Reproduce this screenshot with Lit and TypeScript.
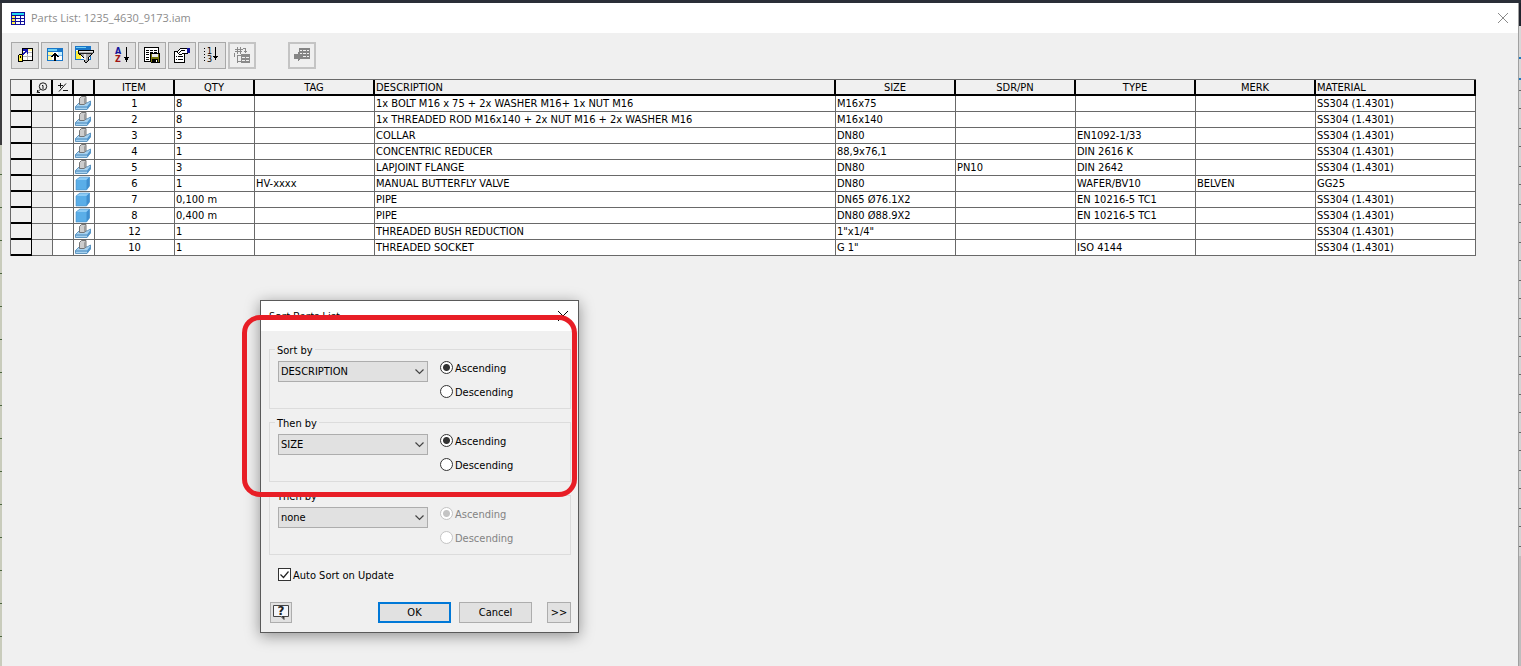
import { LitElement, html, svg, css } from "lit";
import { customElement, state } from "lit/decorators.js";
import { classMap } from "lit/directives/class-map.js";

type Part = {
  kind: "assembly" | "part";
  item: string;
  qty: string;
  tag?: string;
  description: string;
  size?: string;
  sdr?: string;
  type?: string;
  merk?: string;
  material: string;
};

const SS = "SS304 (1.4301)";

const PARTS: Part[] = [
  { kind: "assembly", item: "1", qty: "8", description: "1x BOLT M16 x 75 + 2x WASHER M16+ 1x NUT M16", size: "M16x75", material: SS },
  { kind: "assembly", item: "2", qty: "8", description: "1x THREADED ROD M16x140 + 2x NUT M16 + 2x WASHER M16", size: "M16x140", material: SS },
  { kind: "assembly", item: "3", qty: "3", description: "COLLAR", size: "DN80", type: "EN1092-1/33", material: SS },
  { kind: "assembly", item: "4", qty: "1", description: "CONCENTRIC REDUCER", size: "88,9x76,1", type: "DIN 2616 K", material: SS },
  { kind: "assembly", item: "5", qty: "3", description: "LAPJOINT FLANGE", size: "DN80", sdr: "PN10", type: "DIN 2642", material: SS },
  { kind: "part", item: "6", qty: "1", tag: "HV-xxxx", description: "MANUAL BUTTERFLY VALVE", size: "DN80", type: "WAFER/BV10", merk: "BELVEN", material: "GG25" },
  { kind: "part", item: "7", qty: "0,100 m", description: "PIPE", size: "DN65 Ø76.1X2", type: "EN 10216-5 TC1", material: SS },
  { kind: "part", item: "8", qty: "0,400 m", description: "PIPE", size: "DN80 Ø88.9X2", type: "EN 10216-5 TC1", material: SS },
  { kind: "assembly", item: "12", qty: "1", description: "THREADED BUSH REDUCTION", size: '1"x1/4"', material: SS },
  { kind: "assembly", item: "10", qty: "1", description: "THREADED SOCKET", size: 'G 1"', type: "ISO 4144", material: SS },
];

const ICONS = {
  column: svg`
    <path d="M7 2h11v13H7z" fill="#000"/>
    <path d="M8 3h9v11H8z" fill="#fff"/>
    <path d="M8 3h4v2H8zM13 3h4v2h-4z" fill="#fff79a"/>
    <path d="M12 3h1v11h-1zM8 6h9v1H8zM8 10h9v1H8z" fill="#b8b8b8"/>
    <path d="M8 3h5v5h-1V6h-1v1h-1v1H9v1H7V8h1V7h1V6h1V5H8z" fill="#1414b4"/>
    <path d="M3 9h1V8h3v1h1v7H3z" fill="#000"/>
    <path d="M4 9h3v6H4z" fill="#ffee3c"/>
    <path d="M5 10h1v2H5z" fill="#000"/>`,
  heading: svg`
    <path d="M2 2h16v13H2z" fill="#1a76c8"/>
    <path d="M3 3h9v2H3z" fill="#6fd0f5"/>
    <path d="M3 6h14v8H3z" fill="#fff"/>
    <path d="M3 6h5v3H3zM3 10h4v4H3z" fill="#fff6a0"/>
    <path d="M13 6h4v3h-4z" fill="#c8f0ff"/>
    <path d="M3 9h14v1H3z" fill="#7bb8e8"/>
    <path d="M9 7h2v1h1v1h1v1h1v1h-2v-1h-1v5H9v-5H8v1H6v-1h1V9h1V8h1z" fill="#000"/>`,
  filter: svg`
    <path d="M0 0h16v14H0z" fill="#1a76c8"/>
    <path d="M1 1h10v1H1z" fill="#6fd0f5"/>
    <path d="M1 4h14v9H1z" fill="#fff"/>
    <path d="M1 5h5v8H1z" fill="#ffee3c"/>
    <path d="M3 4.500h15.500v2L13 12v3l-2 2-2-2v-3L3 6.500z" fill="#a9a9a9" stroke="#000"/>
    <path d="M4 5h14v1H4zM9 8h2v6H9z" fill="#e8e8e8"/>
    <path d="M4 7h14v1H4z" fill="#222"/>`,
  sort: svg`
    <text x="3" y="8" class="glyph bold" fill="#14149b">A</text>
    <text x="3" y="16" class="glyph bold" fill="#a01414">Z</text>
    <path d="M14 1h1v10h2v1h-1v2h-1v2h-1v-2h-1v-2h-1v-1h2z" fill="#000"/>`,
  export: svg`
    <path d="M2.500 1.500h14v14h-14z" fill="#fff" stroke="#000"/>
    <path d="M4 4h3M8 4h3M12 4h3M4 6h3M8 6h3M12 6h3M4 8.500h3M8 8.500h3M4 11h3M4 13h3" stroke="#000" fill="none"/>
    <path d="M8.500 7.500h9v9h-8l-1-1z" fill="#77770a" stroke="#000"/>
    <path d="M10 8h6v3h-6z" fill="#e8e8e8"/>
    <path d="M10 13h6v3h-6z" fill="#000"/>
    <path d="M14 14h1v2h-1z" fill="#fff"/>`,
  table: svg`
    <path d="M2.500 5.500h10v11h-10z" fill="#fff" stroke="#000"/>
    <path d="M4 10.500h1M6 10.500h5M4 13.500h1M6 13.500h5" stroke="#000" fill="none"/>
    <path d="M5 6l4-4h6v5h-3l-4 2z" fill="#fff" stroke="#000"/>
    <path d="M7 7l3-3M10 4h3" stroke="#000" fill="none"/>
    <path d="M15 2h3v5h-3z" fill="#14149b"/>`,
  renumber: svg`
    <path d="M2 2h1v1H2zM2 5h1v1H2zM2 8h1v1H2zM2 11h1v1H2zM2 14h1v1H2z" fill="#000"/>
    <text x="5" y="8" class="glyph">1</text>
    <text x="5" y="16" class="glyph">3</text>
    <path d="M13 1h1v9h2v1h-1v1h-1v2h-1v-2h-1v-1h-1v-1h2z" fill="#000"/>`,
  override: svg`
    <path d="M5 1h1v7H5zM8 1h1v7H8zM3 3h8v1H3zM3 5h7v1H3zM2 7h1v4H2zM5 9h1v8H5zM5 9h4v1H5zM5 15h4v1H5zM11 2h3v1h-3zM13 2h1v5h-1zM12 5h3v1h-3z" fill="#8a8a8a"/>
    <path d="M9 8h9v9H9z" fill="#8a8a8a"/>
    <path d="M10 11h3v1h-3zM14 11h3v1h-3zM10 14h3v1h-3zM14 14h3v1h-3z" fill="#efefef"/>`,
  member: svg`
    <path d="M7 2h11v11H7z" fill="#858585"/>
    <path d="M8 4h2v1H8zM11 4h3v1h-3zM15 4h2v1h-2zM8 7h2v1H8zM11 7h3v1h-3zM15 7h2v1h-2zM11 10h3v1h-3zM15 10h2v1h-2z" fill="#efefef"/>
    <path d="M2 8h4V6l5 4-5 5v-2H2z" fill="#858585"/>`,
};

@customElement("tool-button")
class ToolButton extends LitElement {
  static properties = {
    icon: { type: String },
    label: { type: String },
    disabled: { type: Boolean },
  };
  declare icon: keyof typeof ICONS;
  declare label: string;
  declare disabled: boolean;

  static styles = css`
    :host { display: block; }
    button {
      display: flex;
      align-items: center;
      justify-content: center;
      box-sizing: border-box;
      width: 28px;
      height: 27px;
      padding: 0;
      border: 1px solid #a9a9a9;
      background: #e1e1e1;
    }
    button:disabled { background: #efefef; border: 2px solid #c4c4c4; }
    svg { display: block; flex: none; }
    .glyph { font: 8px "DejaVu Sans", sans-serif; }
    .bold { font-weight: 700; }
  `;

  render() {
    return html`<button type="button" aria-label=${this.label} ?disabled=${this.disabled}>
      <svg width="20" height="19" viewBox="0 0 20 19" shape-rendering="crispEdges">${ICONS[this.icon]}</svg>
    </button>`;
  }
}

@customElement("parts-table")
class PartsTable extends LitElement {
  static styles = css`
    :host { display: block; }
    table {
      width: 100%;
      table-layout: fixed;
      border-collapse: separate;
      border-spacing: 0;
      border-top: 1px solid #696969;
      border-left: 1px solid #696969;
      background: #fff;
      color: #000;
    }
    .c-mark { width: 21px; }
    .c-short { width: 80px; }
    .c-mid { width: 120px; }
    .c-long { width: 160px; }
    th, td {
      box-sizing: border-box;
      height: 16px;
      padding: 0 1px;
      overflow: hidden;
      white-space: nowrap;
      line-height: 14px;
      text-align: left;
      font-weight: 400;
      border-right: 1px solid #696969;
      border-bottom: 1px solid #696969;
    }
    th {
      background: #f0f0f0;
      border-right: 2px solid #000;
      border-bottom: 2px solid #000;
      padding: 2px 1px 0;
      line-height: 12px;
    }
    td.edge { background: #f0f0f0; border-right: 1px solid #000; border-bottom: 2px solid #000; }
    td.flag { background: #f0f0f0; }
    .center { text-align: center; }
    svg { display: block; }
    th svg { margin: 0 auto; }
  `;

  private mark(kind: Part["kind"]) {
    return kind === "part"
      ? html`<svg width="16" height="15" viewBox="0 0 16 15" role="img" aria-label="Part">
          <path d="M1 4l4-3h9.500v9l-3 4H1z" fill="#5aaee8"/>
          <path d="M1 4l4-3h9.500l-3 3z" fill="#8ccbf5"/>
          <path d="M11.500 4l3-3v9l-3 4z" fill="#3f8fd0"/>
          <path d="M1 4l4-3h9.500v9l-3 4H1z" fill="none" stroke="#4a90c8" stroke-width=".6"/>
        </svg>`
      : html`<svg width="16" height="15" viewBox="0 0 16 15" role="img" aria-label="Assembly">
          <path d="M.5 10.500L4 7h8l3.500-2v4L12 13.500H.500z" fill="#a9d3f0" stroke="#4684b4" stroke-width=".8"/>
          <path d="M12 10.500L15.500 6v3L12 13.500z" fill="#4f94cc"/>
          <path d="M.5 10.500H12v1H.500z" fill="#3f83bb"/>
          <path d="M4.500 8.500v-6L6.500 .500H11V7L9 8.500z" fill="#cdcdcd" stroke="#6a6a6a" stroke-width=".9"/>
          <path d="M9 8V2.500L11 .500V7z" fill="#9c9c9c"/>
        </svg>`;
  }

  render() {
    return html`<table>
      <colgroup>
        <col class="c-mark"><col class="c-mark"><col class="c-mark"><col class="c-mark">
        <col class="c-short"><col class="c-short"><col class="c-mid"><col>
        <col class="c-mid"><col class="c-mid"><col class="c-mid"><col class="c-mid"><col class="c-long">
      </colgroup>
      <thead>
        <tr>
          <th></th>
          <th><svg width="12" height="12" viewBox="0 0 12 12" role="img" aria-label="Ballooned">
            <circle cx="7" cy="4.500" r="3.700" fill="none" stroke="#000" stroke-width=".9"/>
            <path d="M6 3.500h1V7M4 7.500L1 10.500M1.500 8v2.500H4" fill="none" stroke="#000" stroke-width=".9"/>
          </svg></th>
          <th><svg width="12" height="12" viewBox="0 0 12 12" role="img" aria-label="Visibility">
            <path d="M3.500 1v5M1 3.500h5M2 9.500L9 1.500M6 8.500h5" fill="none" stroke="#000" stroke-width=".9"/>
          </svg></th>
          <th></th>
          <th class="center">ITEM</th>
          <th class="center">QTY</th>
          <th class="center">TAG</th>
          <th>DESCRIPTION</th>
          <th class="center">SIZE</th>
          <th class="center">SDR/PN</th>
          <th class="center">TYPE</th>
          <th class="center">MERK</th>
          <th>MATERIAL</th>
        </tr>
      </thead>
      <tbody>
        ${PARTS.map(
          (p) => html`<tr>
            <td class="edge"></td>
            <td class="flag"></td>
            <td></td>
            <td>${this.mark(p.kind)}</td>
            <td class="center">${p.item}</td>
            <td>${p.qty}</td>
            <td>${p.tag}</td>
            <td>${p.description}</td>
            <td>${p.size}</td>
            <td>${p.sdr}</td>
            <td>${p.type}</td>
            <td>${p.merk}</td>
            <td>${p.material}</td>
          </tr>`
        )}
      </tbody>
    </table>`;
  }
}

type Level = { legend: string; key: string; descending: boolean };

@customElement("sort-dialog")
class SortDialog extends LitElement {
  @state() private levels: Level[] = [
    { legend: "Sort by", key: "DESCRIPTION", descending: false },
    { legend: "Then by", key: "SIZE", descending: false },
    { legend: "Then by", key: "none", descending: false },
  ];

  static styles = css`
    :host {
      display: block;
      box-sizing: border-box;
      border: 1px solid #5a5a5a;
      background: #f0f0f0;
      color: #000;
      box-shadow: 0 3px 14px rgba(0, 0, 0, 0.4);
    }
    header {
      display: flex;
      align-items: center;
      justify-content: space-between;
      height: 30px;
      padding: 0 9px 0 8px;
      background: #fff;
      font: 11px/16px "Open Sans", sans-serif;
    }
    h2 { margin: 0; font: inherit; }
    .close { display: block; padding: 0; border: 0; background: none; }
    .close svg { display: block; }
    form {
      display: flex;
      flex-direction: column;
      gap: 13px;
      padding: 18px 7px 9px 8px;
    }
    fieldset {
      display: grid;
      grid-template-columns: 150px 1fr;
      column-gap: 12px;
      align-items: start;
      position: relative;
      box-sizing: border-box;
      height: 60px;
      margin: 0;
      padding: 11px 8px 0;
      border: 1px solid #dcdcdc;
    }
    legend {
      position: absolute;
      top: -7px;
      left: 5px;
      padding: 0 2px;
      background: #f0f0f0;
      line-height: 16px;
    }
    .picker { display: grid; align-items: center; }
    .picker > * { grid-area: 1 / 1; }
    .picker svg { justify-self: end; margin-right: 4px; pointer-events: none; }
    select {
      appearance: none;
      box-sizing: border-box;
      width: 100%;
      height: 21px;
      padding: 1px 20px 0 2px;
      border: 1px solid #adadad;
      border-radius: 0;
      background: #e1e1e1;
      color: #000;
      font: inherit;
    }
    .orders { display: flex; flex-direction: column; gap: 10px; }
    label { display: flex; align-items: flex-start; gap: 2px; height: 14px; line-height: 16px; }
    .off { color: #838383; }
    input {
      appearance: none;
      flex: none;
      box-sizing: border-box;
      width: 13px;
      height: 13px;
      margin: 0;
      border: 1px solid #333;
      background: #fff;
    }
    input[type="radio"] { border-radius: 50%; }
    input[type="radio"]:checked { background: radial-gradient(circle, #333 0 3px, #fff 4px); }
    input[type="radio"]:disabled { border-color: #c4c4c4; }
    input[type="radio"]:checked:disabled { background: radial-gradient(circle, #c4c4c4 0 3px, #fff 4px); }
    .check { display: grid; grid-template-columns: 13px 1fr; margin: 0 9px; }
    .check input, .check svg { grid-area: 1 / 1; }
    .check svg { pointer-events: none; }
    .actions { display: flex; align-items: center; gap: 8px; margin: 7px 0 0 1px; }
    .actions button {
      box-sizing: border-box;
      height: 21px;
      padding: 0;
      border: 1px solid #adadad;
      background: #e1e1e1;
      color: #000;
      font: inherit;
    }
    .actions .help { width: 22px; margin-right: auto; }
    .help svg { display: block; margin: 0 auto; }
    .actions .wide { width: 73px; }
    .actions .default { border: 2px solid #0078d7; }
    .actions .more { width: 24px; margin-left: 7px; }
    .glyph { font: bold 12px "DejaVu Sans", sans-serif; }
  `;

  private setOrder(index: number, descending: boolean) {
    this.levels = this.levels.map((l, i) => (i === index ? { ...l, descending } : l));
  }

  private setKey(index: number, key: string) {
    this.levels = this.levels.map((l, i) => (i === index ? { ...l, key } : l));
  }

  private level(l: Level, i: number) {
    const off = l.key === "none";
    return html`<fieldset>
      <legend>${l.legend}</legend>
      <div class="picker">
        <select aria-label=${l.legend} @change=${(e: Event) => this.setKey(i, (e.target as HTMLSelectElement).value)}>
          ${["none", "ITEM", "QTY", "TAG", "DESCRIPTION", "SIZE", "TYPE", "MATERIAL"].map(
            (k) => html`<option ?selected=${k === l.key}>${k}</option>`
          )}
        </select>
        <svg width="9" height="6" viewBox="0 0 9 6"><path d="M.500 .500l4 4 4-4" fill="none" stroke="#444" stroke-width="1.200"/></svg>
      </div>
      <div class="orders">
        ${[false, true].map(
          (d) => html`<label class=${classMap({ off })}>
            <input type="radio" name="order-${i}" .checked=${l.descending === d} ?disabled=${off}
              @change=${() => this.setOrder(i, d)}>${d ? "Descending" : "Ascending"}
          </label>`
        )}
      </div>
    </fieldset>`;
  }

  render() {
    return html`
      <header>
        <h2>Sort Parts List</h2>
        <button class="close" type="button" aria-label="Close">
          <svg width="12" height="12" viewBox="0 0 12 12"><path d="M1 1l10 10M11 1L1 11" stroke="#000" fill="none"/></svg>
        </button>
      </header>
      <form @submit=${(e: Event) => e.preventDefault()}>
        ${this.levels.map((l, i) => this.level(l, i))}
        <label class="check">
          <input type="checkbox" checked>
          <svg width="13" height="13" viewBox="0 0 13 13"><path d="M2.500 6.500l3 3 5-6" fill="none" stroke="#222" stroke-width="1.200"/></svg>
          Auto Sort on Update
        </label>
        <div class="actions">
          <button class="help" type="button" aria-label="Help">
            <svg width="18" height="17" viewBox="0 0 18 17">
              <path d="M1.500 1.500h15v11H12v3l-3-3H1.500z" fill="#f4f6fa" stroke="#444"/>
              <path d="M9 12h3v3z" fill="#333"/>
              <text x="9" y="11" text-anchor="middle" class="glyph" fill="#222">?</text>
            </svg>
          </button>
          <button class="wide default" type="submit">OK</button>
          <button class="wide" type="button">Cancel</button>
          <button class="more" type="button">&gt;&gt;</button>
        </div>
      </form>
    `;
  }
}

@customElement("app-root")
class AppRoot extends LitElement {
  static styles = css`
    :host {
      display: grid;
      grid-template-columns: 2px 1fr 3px;
      box-sizing: border-box;
      min-height: 100vh;
      padding-top: 3px;
      background: #2a2f38;
      font: 11px/14px "DejaVu Sans Condensed", "Noto Sans", sans-serif;
    }
    .left {
      background:
        linear-gradient(#3c3c3e 142px, transparent 142px),
        repeating-linear-gradient(#c9ccbc 0 6px, #4c6640 6px 7px, #c9ccbc 7px 33px);
    }
    .right {
      border-left: 1px solid #a0a0a0;
      background:
        linear-gradient(#20242e 23px, #d8d8d8 23px 54px, #1c78c0 54px 56px, #d8d8d8 56px 75px, #1c78c0 75px 77px, transparent 77px 553px, #bdbdbd 553px),
        repeating-linear-gradient(#d4d4d4 0 11px, #666 11px 12px, #d4d4d4 12px 29px, #666 29px 30px, #d4d4d4 30px 38px);
    }
    .window { position: relative; min-width: 0; background: #f0f0f0; }
    .titlebar {
      display: flex;
      align-items: center;
      gap: 6px;
      height: 30px;
      padding: 0 9px;
      background: #fff;
      color: #8c8c8c;
      font: 11px/16px "Open Sans", sans-serif;
    }
    h1 { margin: 0; font: inherit; }
    .titlebar svg { display: block; }
    .close { margin-left: auto; padding: 0; border: 0; background: none; }
    .toolbar { display: flex; gap: 2px; padding: 9px 9px 0; }
    .group { margin-left: 7px; }
    .apart { margin-left: 30px; }
    parts-table { margin: 10px 42px 0 8px; }
    sort-dialog { position: absolute; left: 258px; top: 297px; width: 319px; }
    .highlight {
      position: absolute;
      left: 240px;
      top: 312px;
      box-sizing: border-box;
      width: 335px;
      height: 182px;
      border: 5px solid #e81e26;
      border-radius: 18px;
      pointer-events: none;
    }
  `;

  render() {
    return html`
      <div class="left"></div>
      <main class="window">
        <header class="titlebar">
          <svg width="14" height="13" viewBox="0 0 14 13" shape-rendering="crispEdges">
            <path d="M0 0h14v13H0z" fill="#10109a"/>
            <path d="M1 1h12v2H1z" fill="#22d8f0"/>
            <path d="M1 4h3v2H1zM1 7h3v2H1zM1 10h3v2H1z" fill="#fff04a"/>
            <path d="M5 4h4v2H5zM10 4h3v2h-3zM5 7h4v2H5zM10 7h3v2h-3zM5 10h4v2H5zM10 10h3v2h-3z" fill="#fff"/>
          </svg>
          <h1>Parts List: 1235_4630_9173.iam</h1>
          <button class="close" type="button" aria-label="Close">
            <svg width="12" height="12" viewBox="0 0 12 12"><path d="M1 1l10 10M11 1L1 11" stroke="#8a8a8a" fill="none"/></svg>
          </button>
        </header>
        <nav class="toolbar" aria-label="Parts list tools">
          <tool-button icon="column" label="Column Chooser"></tool-button>
          <tool-button icon="heading" label="Group Settings"></tool-button>
          <tool-button icon="filter" label="Filter Settings"></tool-button>
          <tool-button class="group" icon="sort" label="Sort"></tool-button>
          <tool-button icon="export" label="Export"></tool-button>
          <tool-button icon="table" label="Table Layout"></tool-button>
          <tool-button icon="renumber" label="Renumber Items"></tool-button>
          <tool-button icon="override" label="Save Item Overrides" disabled></tool-button>
          <tool-button class="apart" icon="member" label="Member Selection" disabled></tool-button>
        </nav>
        <parts-table></parts-table>
        <sort-dialog></sort-dialog>
        <div class="highlight"></div>
      </main>
      <div class="right"></div>
    `;
  }
}
